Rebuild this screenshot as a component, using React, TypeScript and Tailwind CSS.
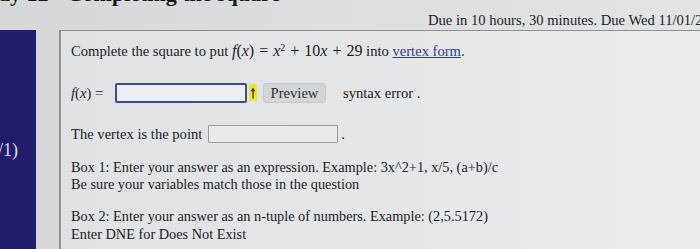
import React from "react";

function UpArrow() {
  return (
    <span className="ml-[2px] flex h-[17px] w-[8px] items-center justify-center rounded-[1px] bg-[#ece43a]">
      <svg width="6" height="12" viewBox="0 0 6 12">
        <path d="M3 11.5V1.5" stroke="#3a3320" strokeWidth="1.2" fill="none" />
        <path d="M0.6 4.2L3 1L5.4 4.2Z" fill="#3a3320" />
      </svg>
    </span>
  );
}

export default function App() {
  return (
    <div className="relative h-[249px] w-[700px] overflow-hidden bg-gradient-to-r from-[#d5d7d9] via-[#dcdee0] to-[#e2e4e6] font-['Liberation_Serif',serif] text-[#1c1c1e]">
      <div className="h-[10px] overflow-hidden">
        <div className="-ml-[17px] -mt-[19px] whitespace-nowrap text-[22px] font-bold leading-[25px] text-[#161616]">
          Day 12 - Completing the square
        </div>
      </div>

      <div className="h-[20px] whitespace-nowrap pl-[428px] text-[14.6px] leading-[20px]">
        Due in 10 hours, 30 minutes. Due Wed 11/01/2023 11:59pm
      </div>

      <div className="flex h-[230px]">
        <div className="w-[36px] shrink-0 bg-[#221c6c] pt-[110px]">
          <div className="-ml-[2px] whitespace-nowrap text-[18px] leading-[20px] text-[#dcdcee]">/1)</div>
        </div>
        <div className="ml-[23px] flex-1 border-l-2 border-t border-[#8d9093] bg-gradient-to-r from-[#e0e2e4] via-[#e4e6e8] to-[#eaecee] pl-[10px] pt-[10px] text-[14.6px] leading-[20px]">
          <div className="whitespace-nowrap">
            Complete the square to put{" "}
            <span className="text-[16px]">
              <span className="italic">f</span>(<span className="italic">x</span>)<span className="mx-[5px]">=</span>
              <span className="italic">x</span>
              <sup className="text-[10px]">2</sup>
              <span className="mx-[5px]">+</span>10<span className="italic">x</span>
              <span className="mx-[5px]">+</span>29
            </span>{" "}
            into <span className="text-[#2c3c9c] underline">vertex form</span>.
          </div>

          <div className="mt-[21px] flex h-[21px] items-center whitespace-nowrap">
            <span className="w-[40px]">
              <span className="italic">f</span>(<span className="italic">x</span>) =
            </span>
            <span className="ml-[4px] h-[20px] w-[132px] rounded-[2px] border-2 border-[#3d4b8c] bg-[#eceef1]"></span>
            <UpArrow />
            <span className="ml-[6px] flex h-[20px] w-[63px] items-center justify-center rounded-[3px] border border-[#c6c9cc] bg-[#d3d6d9] text-[#2e2e30]">
              Preview
            </span>
            <span className="ml-[17px]">syntax error .</span>
          </div>

          <div className="mt-[21px] flex h-[19px] items-center whitespace-nowrap">
            <span>The vertex is the point</span>
            <span className="ml-[6px] h-[18px] w-[130px] rounded-[1px] border border-[#9c9fa2] bg-[#e8eaec]"></span>
            <span className="ml-[3px]">.</span>
          </div>

          <div className="mt-[16px] whitespace-nowrap text-[14.3px] leading-[17px]">
            <div>Box 1: Enter your answer as an expression. Example: 3x^2+1, x/5, (a+b)/c</div>
            <div>Be sure your variables match those in the question</div>
          </div>

          <div className="mt-[14px] whitespace-nowrap text-[14.3px] leading-[18px]">
            <div>Box 2: Enter your answer as an n-tuple of numbers. Example: (2,5.5172)</div>
            <div>Enter DNE for Does Not Exist</div>
          </div>
        </div>
      </div>
    </div>
  );
}
